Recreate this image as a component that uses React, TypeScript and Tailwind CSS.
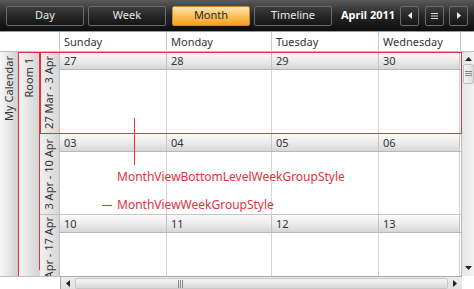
import type { ReactNode } from "react"

const days = ["Sunday", "Monday", "Tuesday", "Wednesday"]
const colW = ["w-[107px]", "w-[105px]", "w-[107px]", "w-[82px]"]

const weeks = [
    { label: "27 Mar - 3 Apr", dates: ["27", "28", "29", "30"], h: "h-[82px]" },
    { label: "3 Apr - 10 Apr", dates: ["03", "04", "05", "06"], h: "h-[81px]" },
    { label: "10 Apr - 17 Apr", dates: ["10", "11", "12", "13"], h: "h-[81px]" },
]

const ToolButton = ({ children, active, className }: { children: ReactNode, active?: boolean, className?: string }) => (
    <div
        className={`flex shrink-0 items-center justify-center h-[20px] rounded-[2px] border text-[11px] ${active
            ? "border-[#c9872a] bg-gradient-to-b from-[#fde6b0] via-[#fbc05a] to-[#f7a11d] text-[#2a2a2a]"
            : "border-[#6b6b6b] bg-gradient-to-b from-[#3c3c3c] to-[#151515] text-[#e8e8e8]"} ${className ?? ""}`}
    >
        {children}
    </div>
)

const Vertical = ({ children, className }: { children: ReactNode, className?: string }) => (
    <span className={`[writing-mode:vertical-rl] rotate-180 whitespace-nowrap text-[11px] text-[#333] ${className ?? ""}`}>{children}</span>
)

const Tri = ({ dir, color = "#eee" }: { dir: "l" | "r" | "u" | "d", color?: string }) => {
    const d = { l: "M4 0L0 3.5L4 7Z", r: "M0 0L4 3.5L0 7Z", u: "M0 4L3.5 0L7 4Z", d: "M0 0L3.5 4L7 0Z" }[dir]
    const horiz = dir === "l" || dir === "r"
    return (
        <svg width={horiz ? 4 : 7} height={horiz ? 7 : 4} viewBox={horiz ? "0 0 4 7" : "0 0 7 4"}><path d={d} fill={color} /></svg>
    )
}

export default function App() {
    return (
        <div className="relative w-[474px] h-[289px] overflow-hidden bg-white" style={{ fontFamily: '"Segoe UI", "Noto Sans", sans-serif' }}>
            {/* toolbar */}
            <div className="flex items-center h-[32px] px-[6px] bg-gradient-to-b from-[#5a5a5a] via-[#262626] to-[#0e0e0e] border-b border-[#9a9a9a]">
                <ToolButton className="w-[78px]">Day</ToolButton>
                <ToolButton className="w-[78px] ml-[4px]">Week</ToolButton>
                <ToolButton className="w-[78px] ml-[6px]" active>Month</ToolButton>
                <ToolButton className="w-[78px] ml-[4px]">Timeline</ToolButton>
                <span className="ml-[9px] shrink-0 whitespace-nowrap text-[11px] font-bold text-white">April 2011</span>
                <ToolButton className="w-[19px] ml-[5px]"><Tri dir="l" /></ToolButton>
                <ToolButton className="w-[19px] ml-[6px]">
                    <svg width="7" height="6" viewBox="0 0 7 6"><path d="M0 0.5h7M0 3h7M0 5.5h7" stroke="#ddd" strokeWidth="1" /></svg>
                </ToolButton>
                <ToolButton className="w-[19px] ml-[5px]"><Tri dir="r" /></ToolButton>
            </div>

            {/* day header */}
            <div className="flex h-[20px] border-b border-[#bdbdbd]">
                <div className="w-[60px] border-r border-[#c8c8c8]" />
                {days.map((d, i) => (
                    <div key={d} className={`${colW[i]} border-r border-[#c8c8c8] pl-[4px] text-[11px] text-[#333] leading-[20px]`}>{d}</div>
                ))}
                <div className="flex-1" />
            </div>

            {/* body */}
            <div className="flex h-[224px]">
                <div className="w-[19px] flex items-start justify-center pt-[4px] bg-gradient-to-r from-[#f6f6f6] via-[#e6e6e6] to-[#cfcfcf] border-r border-[#e8303c]">
                    <Vertical>My Calendar</Vertical>
                </div>
                <div className="w-[21px] bg-gradient-to-r from-[#f4f4f4] to-[#d3d3d3] flex flex-col">
                    <div className="flex-1 mb-[6px] flex items-start justify-center pt-[5px] border-t border-r border-[#e8303c]">
                        <Vertical>Room 1</Vertical>
                    </div>
                </div>
                <div className="w-[20px] flex flex-col border-r border-[#c0c0c0] overflow-hidden">
                    {weeks.map((w) => (
                        <div key={w.label} className={`${w.h} shrink-0 flex items-center justify-center overflow-hidden border-b border-[#c0c0c0] bg-gradient-to-r from-[#f2f2f2] to-[#d6d6d6]`}>
                            <Vertical>{w.label}</Vertical>
                        </div>
                    ))}
                </div>
                <div className="w-[401px] flex flex-col overflow-hidden">
                    {weeks.map((w) => (
                        <div key={w.label} className={`${w.h} shrink-0 flex flex-col`}>
                            <div className="flex h-[18px] border-b border-[#b8b8b8]">
                                {w.dates.map((d, i) => (
                                    <div key={d} className={`${i === 3 ? "w-[81px]" : colW[i]} border-r border-[#c4c4c4] bg-gradient-to-b from-[#fbfbfb] via-[#ececec] to-[#d6d6d6] pl-[4px] text-[11px] leading-[17px] text-[#333]`}>{d}</div>
                                ))}
                            </div>
                            <div className="flex flex-1 border-b border-[#c8c8c8]">
                                {w.dates.map((d, i) => (
                                    <div key={d} className={`${i === 3 ? "w-[81px]" : colW[i]} border-r border-[#d6d6d6]`} />
                                ))}
                            </div>
                        </div>
                    ))}
                </div>
                {/* vertical scrollbar */}
                <div className="w-[13px] flex flex-col items-center border-l border-[#bdbdbd] bg-gradient-to-r from-[#e6e6e6] to-[#f2f2f2]">
                    <div className="mt-[5px]"><Tri dir="u" color="#222" /></div>
                    <div className="w-[11px] h-[20px] mt-[3px] rounded-[2px] border border-[#c2c2c2] bg-gradient-to-r from-[#f4f4f4] to-[#dcdcdc] flex items-center justify-center">
                        <svg width="7" height="6" viewBox="0 0 7 6"><path d="M0 0.5h7M0 2.5h7M0 4.5h7" stroke="#888" strokeWidth="1" /></svg>
                    </div>
                    <div className="flex-1" />
                    <div className="mb-[6px]"><Tri dir="d" color="#222" /></div>
                </div>
            </div>

            {/* horizontal scrollbar */}
            <div className="flex h-[13px]">
                <div className="w-[60px] border-t border-[#bdbdbd] bg-white" />
                <div className="w-[402px] flex items-center border-t border-l border-[#a8a8a8] bg-gradient-to-b from-[#ececec] to-[#e0e0e0]">
                    <div className="w-[14px] flex justify-center"><Tri dir="l" color="#222" /></div>
                    <div className="flex-1 h-[11px] rounded-[2px] border border-[#c6c6c6] bg-gradient-to-b from-[#f6f6f6] to-[#d8d8d8] relative">
                        <svg className="absolute left-[102px] top-[1px]" width="6" height="8" viewBox="0 0 6 8"><path d="M0.5 0v8M2.5 0v8M4.5 0v8" stroke="#888" strokeWidth="1" /></svg>
                    </div>
                    <div className="w-[14px] flex justify-center"><Tri dir="r" color="#222" /></div>
                </div>
                <div className="flex-1 bg-white" />
            </div>

            {/* week group highlight */}
            <div className="absolute left-[40px] top-[52px] w-[422px] h-[82px] border border-[#e8303c]" />

            {/* annotations */}
            <div className="absolute left-[134px] top-[118px] w-[1px] h-[47px] bg-[#e8303c]" />
            <span className="absolute left-[117px] top-[169px] text-[12px] leading-[16px] text-[#e8303c] whitespace-nowrap">MonthViewBottomLevelWeekGroupStyle</span>
            <div className="absolute left-[102px] top-[205px] w-[10px] h-[1px] bg-[#e8303c]" />
            <span className="absolute left-[117px] top-[197px] text-[12px] leading-[16px] text-[#e8303c] whitespace-nowrap">MonthViewWeekGroupStyle</span>
        </div>
    )
}
